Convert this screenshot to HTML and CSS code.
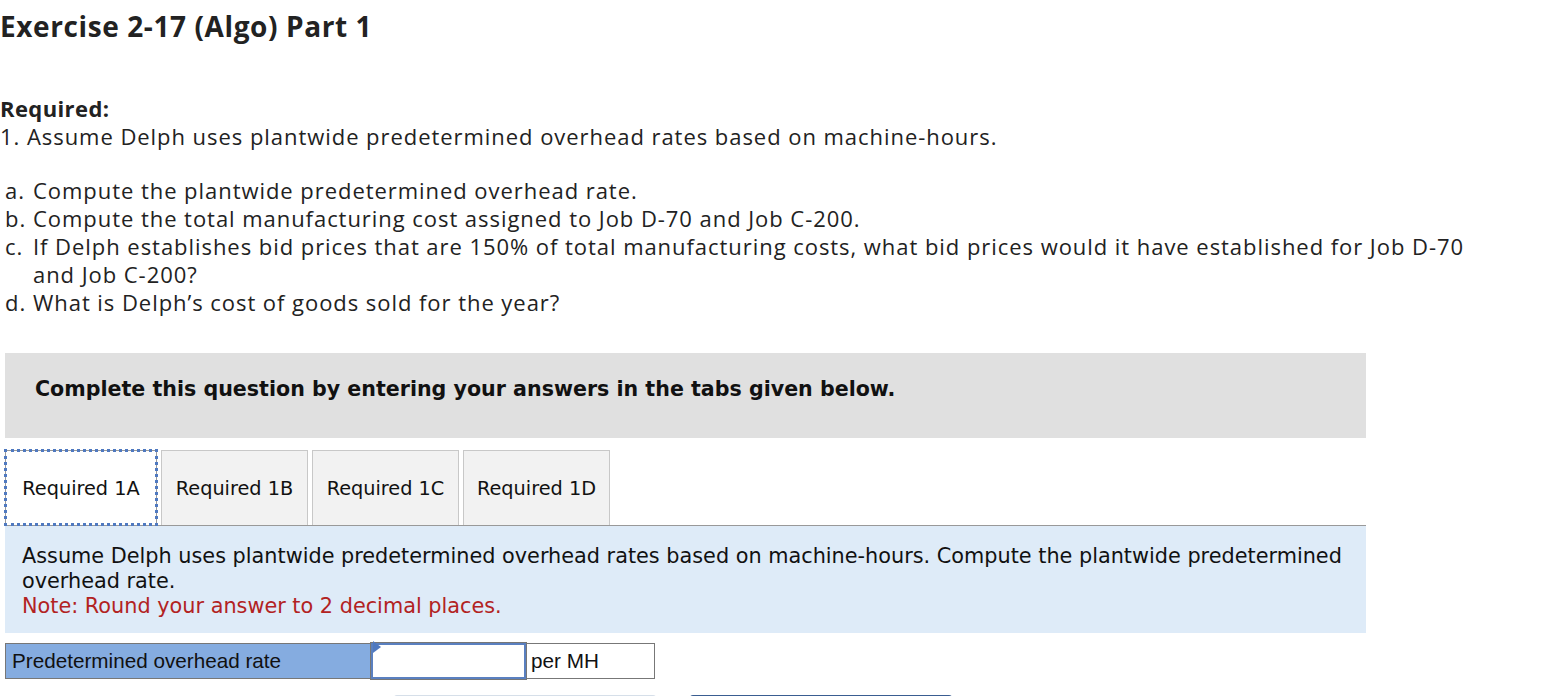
FILE: index.html
```html
<!DOCTYPE html>
<html>
<head>
<meta charset="utf-8">
<link rel="stylesheet" href="styles.css">
</head>
<body>
<h1 class="title">Exercise 2-17 (Algo) Part 1</h1>
<div class="intro">
  <p class="req-label">Required:</p>
  <p class="req-main">1. Assume Delph uses plantwide predetermined overhead rates based on machine-hours.</p>
  <ol class="req-list">
    <li><span class="mk">a.</span><span>Compute the plantwide predetermined overhead rate.</span></li>
    <li><span class="mk">b.</span><span>Compute the total manufacturing cost assigned to Job D-70 and Job C-200.</span></li>
    <li><span class="mk">c.</span><span>If Delph establishes bid prices that are 150% of total manufacturing costs, what bid prices would it have established for Job D-70 and Job C-200?</span></li>
    <li><span class="mk">d.</span><span>What is Delph’s cost of goods sold for the year?</span></li>
  </ol>
</div>
<div class="work">
  <div class="banner">Complete this question by entering your answers in the tabs given below.</div>
  <div class="tabs">
    <div class="tab active">Required 1A</div>
    <div class="tab">Required 1B</div>
    <div class="tab">Required 1C</div>
    <div class="tab">Required 1D</div>
  </div>
  <div class="panel">
    <p>Assume Delph uses plantwide predetermined overhead rates based on machine-hours. Compute the plantwide predetermined overhead rate.</p>
    <p class="note">Note: Round your answer to 2 decimal places.</p>
  </div>
  <div class="answer">
    <div class="cell label">Predetermined overhead rate</div>
    <div class="cell input"><span class="flag"></span></div>
    <div class="cell unit">per MH</div>
  </div>
  <div class="nav">
    <div class="btn prev"></div>
    <div class="btn next"></div>
  </div>
</div>
</body>
</html>
```
FILE: styles.css
```css
html, body {
  margin: 0;
  padding: 0;
  background: #fff;
  color: #222;
}
body {
  font-family: "Open Sans", "Lato", sans-serif;
}
.title {
  margin: 0;
  padding-top: 8px;
  font-size: 28px;
  font-weight: 700;
  letter-spacing: 0.6px;
  line-height: 36px;
  color: #222;
}
.intro {
  margin-top: 50px;
  font-size: 22px;
  letter-spacing: 0.95px;
  line-height: 28px;
  color: #222;
}
.intro p {
  margin: 0;
}
.req-label {
  font-weight: 700;
  letter-spacing: 0.4px;
}
.req-list {
  list-style: none;
  margin: 26px 0 0 0;
  padding: 0 0 0 5px;
  width: 1475px;
}
.req-list li {
  display: flex;
}
.mk {
  width: 28px;
  flex: none;
}
.work {
  margin: 37px 0 0 5px;
  width: 1361px;
  font-family: "DejaVu Sans", Verdana, sans-serif;
}
.banner {
  background: #e0e0e0;
  height: 85px;
  box-sizing: border-box;
  padding: 24px 30px;
  font-size: 20.6px;
  font-weight: 700;
  line-height: 24px;
  color: #111;
}
.tabs {
  display: flex;
  gap: 4px;
  margin-top: 12px;
  height: 75px;
}
.tab {
  box-sizing: border-box;
  width: 147px;
  border: 1px solid #c8c8c8;
  border-bottom: none;
  background: #f2f2f2;
  font-size: 19.3px;
  line-height: 75px;
  text-align: center;
  color: #111;
}
.tab.active {
  background: #fff;
  width: 152px;
  border: 1px solid #999;
  border-bottom: none;
  outline: 3px dotted #4f79c0;
  outline-offset: -2px;
}
.panel {
  background: #deebf8;
  border-top: 1px solid #999;
  padding: 18px 17px 14px;
  font-size: 20.8px;
  line-height: 25px;
  color: #111;
}
.panel p {
  margin: 0;
}
.note {
  color: #b22222;
}
.answer {
  display: flex;
  margin-top: 10px;
  height: 36px;
  font-family: "Liberation Sans", Arial, sans-serif;
  font-size: 20.7px;
  color: #111;
}
.cell {
  box-sizing: border-box;
  border: 1px solid #777;
  height: 36px;
  line-height: 34px;
}
.label {
  width: 366px;
  background: #85ace0;
  padding-left: 6px;
  border-right: none;
}
.input {
  width: 155px;
  border: 2px solid #5a80c0;
  background: #fff;
  position: relative;
  box-shadow: 0 0 0 1px #777;
}
.flag {
  position: absolute;
  left: 0;
  top: 0;
  width: 0;
  height: 0;
  border-top: 6px solid transparent;
  border-bottom: 6px solid transparent;
  border-left: 8px solid #4f79c0;
  transform: translateY(-4px);
}
.unit {
  width: 129px;
  padding-left: 5px;
  border-left: none;
  background: #fff;
}
.nav {
  display: flex;
  gap: 34px;
  margin: 16px 0 0 389px;
}
.btn {
  width: 262px;
  height: 40px;
  border-radius: 3px;
}
.prev {
  background: #eef2f7;
  border-top: 2px solid #d6dfe9;
}
.next {
  background: #4b6d9e;
  border-top: 2px solid #3a5d91;
}
```
